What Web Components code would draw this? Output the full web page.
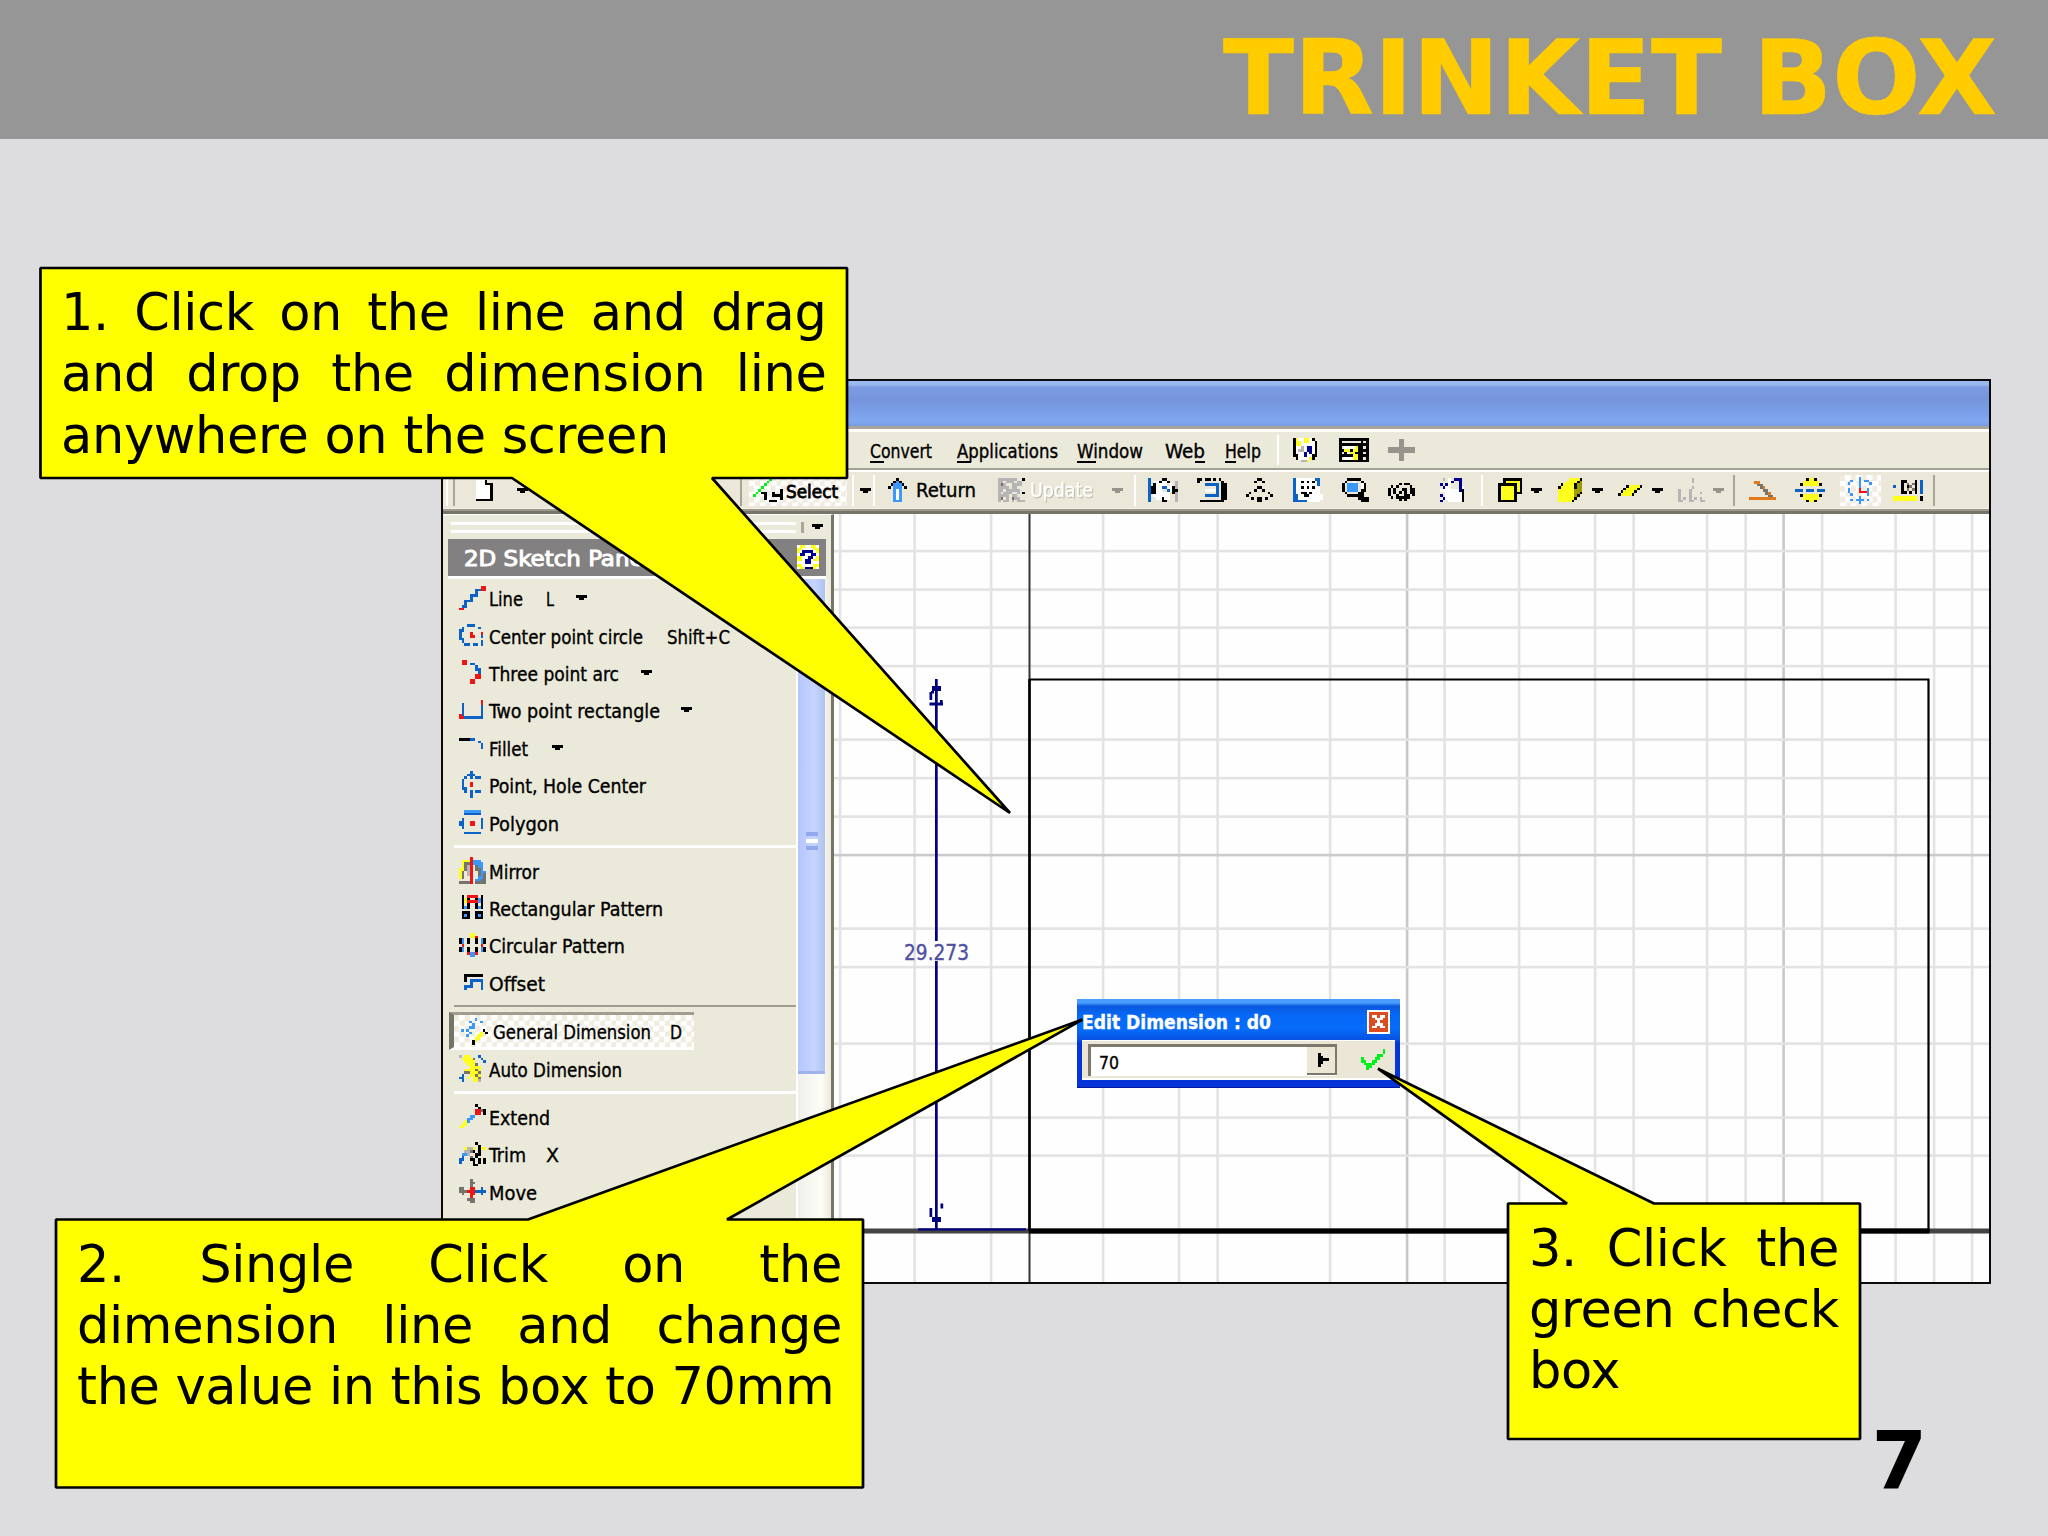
<!DOCTYPE html>
<html lang="en">
<head>
<meta charset="utf-8">
<title>Trinket Box</title>
<style>
body{margin:0;width:2048px;height:1536px;overflow:hidden;background:#dddcde}
</style>
</head>
<body>
<slide-page>
  <slide-title slot="title">TRINKET BOX</slide-title>
  <app-window slot="shot"></app-window>
  <call-out box="40.5,268,847,478" tail="512,478,1010,813,712,478" side="bottom" pad="20.5" lines="1. Click on the line and drag|and drop the dimension line|anywhere on the screen"></call-out>
  <call-out box="56,1219.5,863,1487.5" tail="528,1219.5,1082.5,1019.6,727,1219.5" side="top" pad="21" lines="2. Single Click on the|dimension line and change|the value in this box to 70mm"></call-out>
  <call-out box="1508,1203.5,1860,1439" tail="1567,1203.5,1378,1068.7,1654,1203.5" side="top" pad="21" lines="3. Click the|green check|box"></call-out>
  <page-number>7</page-number>
</slide-page>
<script>
const UI = "'DejaVu Sans Condensed','DejaVu Sans',sans-serif";
const def = (name, render) => customElements.define(name, class extends HTMLElement {
  connectedCallback() {
    if (!this.shadowRoot) this.attachShadow({mode: 'open'}).innerHTML = render(this);
  }
});

/* Pixel-art glyphs: one letter per cell, rows split by "/" */
const PAL = {r:'#f01414',b:'#0c62c6',l:'#3a98fa',y:'#ffff1e',k:'#000',g:'#74746c',w:'#fff',n:'#00008c',o:'#e07a1c',s:'#b6b4b4',v:'#9c9c00',t:'#96948c',e:'#00f01e'};
const ICONS = {
  line:'........rr/......bbrr/......b.../....bbb.../....b...../..bbb...../..b......./.bb......./rr........',
  circle:'...bbb..../.b.....b../bb......../b...r...r./b...rr..b./bb......../.b......b./..bb.bb.b.',
  arc:'.rr......./.rr.bb..../......b.../......bb../.......b../......rr../......rr../....rr..../....rr....',
  rect:'........r./.b......r./.b......b./.b......b./.b......b./rb......b./rrbbbbbbb.',
  fillet:'kkkkbb..../.......b../........b./........b./........../........../..........',
  point:'....b...../...bbb..../..b.b.bb../.b......../.b..r...../.b..r...../.bb......./..b.b.bb../....b...../....b.....',
  polygon:'..llllll../..bbbbbb../........../.b......b./bb..rr..b./bb..rr..b./.b......b./........../..bbbbbb..',
  mirror:'....r...../.yyyrlll../.yggrllll./.ygsr.gll./yygsr.ggl./yg.sr..gll/yg.sr..glg/yg..r..llg/....r.llgg/ggggr.gggg',
  rpat:'.k.rrrr.k./.kyk..klk./.kyrrrrlk./.k.k..k.k./.klk..klk./........../.kkk..kkk./.klk..klk./.kkk..kkk.',
  cpat:'....yy..../....yyr.../kl.k..k.lk/kl.k..k.lk/.r......r./kl.k..k.lk/kl.k..k.lk/...rllr.../....ll....',
  offset:'..kkkkkkk./..k......./..k.bbbbb./....b...b./..bbb...b./..b.....b.',
  gdim:'.....l..../...l...l../....l...../...ll...../l.l.....k./...l...y.k/..l...yy../.....yy.../....ky..../....k.....',
  adim:'s.yy...b../.yyyyg..b./..yyyy...b/...yyyg.../....yyyy../..yyyygy../..ggyyyg../.b..yygy../bb.y.yyg../.b...yys..',
  extend:'......k.../.......k../......rrgk/......rr.k/....ll..../...ll...../..yl....../.yy......./yy........',
  trim:'......k.../.......k../..yssy.kyy/..ssgk.k../.lls..kk../.b..g.k.../bb..kk.k.k/b....k.k.k/.....kk...',
  move:'....g...../....gg..../....g...../gg..rr..b./gggrrrbbbb/.g..rr..b./....r...../...ggg..../....gg....',
  more:'....b...../...bbb..../....b.....',
  doc:'..wwwk../..wwwkkk/..wwwwwk/..wwwwwk/..wwwwwk/..wwwwwk/..wwwwwk/..kkkkkk',
  dd:'kkkk/.kk.', ddt:'tttt/.tt.',
  sel:'......e...../.....e....../....e......./...e......../..e.......k./.e.kk..k..k./e...k..kkkk./....k.....k./......kkk...',
  up:'...k.../..klk../.klllk./k.lll.k/..lwl../..lwl../..lwl../..lwl../..lll..',
  upd:'sssssss..k/ss.sss.ss./sgs..ssss./ssss.ss.../ss.sssss../s.sss..s.k/ssss.ss.../sg.s.gss../s.ss.s.sss',
  t1:'b....kk..../b.wwkwwk..s/b.kwwww.w.s/bkkwwbbwwks/bkkww..bwkk/bkkwwwww.ks/b.wwwwww..s/b..wwkww..s/b....kk...s',
  t2:'kk.kk.k.k./k........k./...bbbbb.kk/.......b.kk/...wwwwb.kk/.......b.kk/...bbbbb.kk/.........kk/.kkkkkkkkk.',
  t3:'....kk..../...k..k.../........../....kk..../...k..k.../.k......k./k........k/..k.kk.k../....kk....',
  t4:'bwwwwwwwbb./bwwkwkwkwb./bwwwwwwwwb./bwwkwkwkww./bwwwwwwwww./bwwkkwkwww./bbwwkkwwwww/bbwwwwwwwww/bbbbbwwwww.',
  t5:'..kkkkk.../.k..w..k../k.llll.wk./k.llll.wk./k.llll.kk./.k....kk../..kkkkkk../......kkkk/.......kkk',
  t6:'........../....k.kk../.k.k....k./k.k..kk.kk/k.k.k.k.kk/k..k..kk.k/.k.kkkkk../....k.k...',
  t7:'.s.w.nnn./...wn..n./n.nw...n./.nww...nw/wwwwwwwnk/..wwwwwwk/n.wwwwwwk/.nwwwwwwk/n..wwwwwk',
  sq:'..kkkkkkk/..kyyyyyk/kkkkkkkyk/kyyyyykyk/kyyyyykyk/kyyyyykkk/kyyyyyk../kyyyyyk../kkkkkkk..',
  box:'....yyyyk/...yyyykv/.kyyyykvv/kyyyyykvv/yyyyyyvvv/yyyyyyvvk/yyyyyyvk./yyyyyyk../yyyyyk...',
  para:'...kyyyyk/..kyyyyk./.kyyyyk../kyyyyk...',
  tree:'.....s..../.....s..../........../.....s..../s...s...../s...s...s./s...s..../s.s.s.s.s/ss..ss..ss',
  ang:'..oo......./...gg....../....go...../.....gg..../......go.../.......gg../oooooooooo.',
  flag:'....kyyk.../...yyyyyy../..kyyyyyyk./.........../bbb.bbb.bbb/.........../..kyyyyyyk./...yyyyyy../....kyyk...',
  coord:'.....l...../..l..l.ll../.l...l...l./.....l...../.l...r..l../.l...rrrl../..l.....l../.....l...../..l.lll.l../.....l.....',
  dim:'...kk...k.b/...k.g.gk.b/b..k.kg.k.b/...k.g.gk.b/...kk.k.k.b/........../yyyyyyyyy.k/yyyyyyyyy.k',
  m1:'kywwyywk./kyywyywwk/kyywwwwwk/kwwswnnwk/kwsswnnwk/kwwwnwnwk/kkwwnwwkk/.kwwwwyk./...ssy...',
  m2:'kkkkkkkkkkk/k.......k.k/kkkkkkkkkkk/k.wwwwykk.k/kkyykyykkkk/k.kwyykkk.k/kkkkkyykkkk/k.wwwyykk.k/kkkkkkkkkkk',
  plus:'....tt..../....tt..../....tt..../tttttttttt/tttttttttt/....tt..../....tt..../....tt....',
  help:'wyywwyyw/yywwwwyy/ywnnnnwy/wnnwwnnw/yywwnnwy/yywnnwyy/wwwnnwww/yywwwwyy/wyynnkyw',
  play:'k.../kk../kkkk/kk../k...',
  close:'ww.ww/.www./..w../.www./ww.ww',
  check:'........e/........e/......ee./e....ee../ee..ee.../.eeee..../..ee....../..e......'
};
def('pixel-icon', el => {
  const c = +(el.getAttribute('cell') || 2.7);
  const rows = ICONS[el.getAttribute('name')].split('/');
  const w = Math.max(...rows.map(r => r.length)) * c, h = rows.length * c;
  let out = '';
  rows.forEach((row, y) => { for (const m of row.matchAll(/([a-z])\1*/g))
    out += `<rect x="${m.index*c}" y="${y*c}" width="${m[0].length*c}" height="${c}" fill="${PAL[m[1]]}"/>`; });
  return `<style>:host{display:block;flex:none}svg{display:block}</style><svg width="${w}" height="${h}" shape-rendering="crispEdges">${out}</svg>`;
});

/* One line of text stretched to an exact width */
def('fit-text', el => {
  const w = el.getAttribute('w'), s = el.getAttribute('size') || 19.5, h = el.getAttribute('h') || 24, y = el.getAttribute('y') || 18;
  return `<style>:host{display:block;flex:none}svg{display:block;overflow:visible}text{font-family:var(--face,${UI});font-weight:var(--weight,400);word-spacing:var(--ws,0);stroke:currentColor;stroke-width:var(--sw,.35px)}</style>
  <svg width="${w}" height="${h}"><text x="0" y="${y}" font-size="${s}" fill="currentColor" textLength="${w}" lengthAdjust="spacingAndGlyphs">${el.textContent}</text></svg>`;
});

def('slide-page', () => `<style>
  :host{display:flex;flex-direction:column;position:relative;width:2048px;height:1536px}
  .shot{margin:240px 0 0 441px}
</style><slot name="title"></slot><div class="shot"><slot name="shot"></slot></div><slot></slot>`);

def('slide-title', el => `<style>
  :host{display:flex;justify-content:flex-end;height:139px;background:#969696;color:#fc0;--face:'DejaVu Sans',sans-serif;--weight:700;--ws:-5px;--sw:.6px}
  fit-text{margin-right:51px}
</style><fit-text w="774" size="102.5" h="139" y="113.5">${el.textContent}</fit-text>`);

def('page-number', () => `<style>
  :host{position:absolute;left:1871.500px;top:1414px;font:700 80px/94px 'DejaVu Sans',sans-serif;color:#000}
</style><slot></slot>`);

def('call-out', el => {
  const [x1,y1,x2,y2] = el.getAttribute('box').split(',').map(Number);
  const [ax,ay,tx,ty,bx,by] = el.getAttribute('tail').split(',').map(Number);
  const pts = el.getAttribute('side') === 'bottom'
    ? `${x1},${y1} ${x2},${y1} ${x2},${y2} ${bx},${by} ${tx},${ty} ${ax},${ay} ${x1},${y2}`
    : `${x1},${y1} ${ax},${ay} ${tx},${ty} ${bx},${by} ${x2},${y1} ${x2},${y2} ${x1},${y2}`;
  const L = el.getAttribute('lines').split('|');
  const pad = el.getAttribute('pad');
  return `<style>
  :host{position:absolute;left:0;top:0;width:2048px;height:1536px}
  svg{position:absolute;left:0;top:0}
  .text{position:absolute;left:${x1}px;top:${y1}px;width:${x2-x1}px;box-sizing:border-box;padding:14px ${pad}px 0;font:51px/61.4px 'DejaVu Sans',sans-serif;letter-spacing:-.35px;color:#000}
  .text div{text-align-last:justify;white-space:nowrap}
  .text div:last-child{text-align-last:left}
</style><svg width="2048" height="1536"><polygon points="${pts}" fill="#ff0" stroke="#000" stroke-width="2.7" stroke-linejoin="bevel"/></svg>
<div class="text">${L.map(t => `<div>${t}</div>`).join('')}</div>`;
});

/* Horizontal strip: entries are [x, width, markup]; gaps come from the x values */
const strip = (start, items) => { let at = start; return items.map(([x, w, m]) => {
  const g = x - at; at = x + w;
  return `<span style="margin-left:${g}px;width:${w}px">${m}</span>`; }).join(''); };
const ico = n => `<pixel-icon name="${n}"></pixel-icon>`;
const vline = c => `<i style="background:${c}"></i>`;

def('menu-strip', () => `<style>
  :host{display:flex;align-items:center;height:36px;background:#ebe9d9;border-bottom:2px solid #a5a294}
  span{flex:none;display:block}i{display:block;width:2px;height:30px}
  .u{border-bottom:2px solid #000;width:14px;margin-top:-3px}
  .m{padding-top:2px}
</style>${strip(443, [
  [870,62,'<div class="m"><fit-text w="62">Convert</fit-text><div class="u"></div></div>'],
  [957,101,'<div class="m"><fit-text w="101">Applications</fit-text><div class="u"></div></div>'],
  [1077,66,'<div class="m"><fit-text w="66">Window</fit-text><div class="u" style="width:19px"></div></div>'],
  [1165,40,'<div class="m"><fit-text w="40">Web</fit-text><div class="u" style="width:10px;margin-left:30px"></div></div>'],
  [1225,36,'<div class="m"><fit-text w="36">Help</fit-text><div class="u" style="width:11px"></div></div>'],
  [1277,2,vline('#fff')],[1293,27,ico('m1')],[1339,31,ico('m2')],[1388,27,ico('plus')]])}`);

def('tool-strip', () => `<style>
  :host{display:flex;align-items:center;height:37px;border-top:2px solid #fff;background:#ebe8d9;border-bottom:2px solid #9c998a;box-shadow:inset 0 -1px #f4f2e6}
  span{flex:none;display:block}i{display:block;width:2px;height:31px}
  .chk{display:flex;align-items:center;height:31px;background:repeating-conic-gradient(#fff 0 25%,#f1ebe0 0 50%) 0 0/10.8px 10.8px}
  .dis{color:#fff;filter:drop-shadow(1px 1px 0 #b9b6a8)}
</style>${strip(443, [
  [446,5,vline('#fff')],[453,2,vline('#a8a598')],[471,24,ico('doc')],[517,11,ico('dd')],[543,11,ico('dd')],
  [740,2,vline('#a8a598')],[749,98,`<div class="chk" style="padding-left:4px">${ico('sel')}<fit-text w="52" style="margin-left:1px;--sw:.8px" size="18.5" y="19">Select</fit-text></div>`],
  [852,2,vline('#fff')],[860,11,ico('dd')],[873,2,vline('#fff')],
  [888,19,ico('up')],[916,60,'<fit-text w="60">Return</fit-text>'],
  [998,27,ico('upd')],[1030,63,'<fit-text class="dis" w="63">Update</fit-text>'],[1112,11,ico('ddt')],[1134,2,vline('#fff')],
  [1148,30,ico('t1')],[1197,30,ico('t2')],[1246,27,ico('t3')],[1293,30,ico('t4')],[1342,27,ico('t5')],[1388,30,ico('t6')],[1440,25,ico('t7')],
  [1481,2,vline('#fff')],[1498,25,ico('sq')],[1531,11,ico('dd')],[1558,25,ico('box')],[1592,11,ico('dd')],[1618,25,ico('para')],[1652,11,ico('dd')],
  [1678,27,ico('tree')],[1713,11,ico('ddt')],[1733,2,vline('#a8a598')],[1749,30,ico('ang')],[1795,30,ico('flag')],
  [1840,41,`<div class="chk" style="padding-left:5px">${ico('coord')}</div>`],[1893,30,ico('dim')],[1933,2,vline('#a8a598')]])}`);

const row = (icon, text, w, tail = '', cls = '') => `<div class="row ${cls}"><b>${ico(icon)}</b><fit-text w="${w}" h="37" y="27" size="20">${text}</fit-text>${tail}</div>`;
const key = (t, w, gap) => `<fit-text w="${w}" h="37" y="27" size="20" style="margin-left:${gap}px">${t}</fit-text>`;
const dd = gap => `<pixel-icon name="dd" style="margin-left:${gap}px"></pixel-icon>`;

def('sketch-panel', () => `<style>
  :host{display:flex;flex-direction:column;width:388px;background:#ebe9d9;border-right:3px solid #77756a;flex:none;border-top:1px solid #fff}
  .grip{display:flex;align-items:center;height:24px;padding:0 8px 0 8px}
  .grip u{flex:1;height:5px;border-top:3px solid #fff;border-bottom:3px solid #fff;margin-right:5px}
  .grip i{width:3px;height:11px;background:#aaa79a;margin-right:8px}
  .head{display:flex;align-items:center;justify-content:space-between;height:37px;margin:0 5px 0 5px;background:#828080;color:#fff;padding:0 7px 0 16px;border-bottom:3px solid #fff}
  .body{display:flex;flex:1;min-height:0}
  .list{flex:1;display:flex;flex-direction:column}
  .row{display:flex;align-items:center;height:37.4px;flex:none;padding-left:16px;box-sizing:border-box}
  .row b{width:30px;flex:none}
  .on{margin-left:6px;width:245px;padding-left:7px;border:solid;border-width:3px 0 3px 5px;border-color:#a19e90 #fff #fff #77756a;background:repeating-conic-gradient(#fff 0 25%,#f1ece0 0 50%) 0 0/10.8px 10.8px}
  .on b{width:32px}
  .on fit-text{margin-top:-1px}
  hr{flex:none;border:0;height:3px;background:#fff;margin:4px 0 3.6px 11px}
  hr.d{background:#a09e90;height:2px;margin-bottom:5.5px}
  .bar{width:35px;flex:none;border-left:2px solid #fff;background:linear-gradient(90deg,#f0efea,#fdfdf8 70%,#ebe9d9);box-sizing:border-box}
  .thumb{display:flex;flex-direction:column;align-items:center;justify-content:center;gap:3px;width:27px;height:495px;background:linear-gradient(90deg,#b4c6fa,#c6d4ff 60%,#aec4ee);border-bottom:3px solid #9db2ee;box-sizing:border-box;padding-top:32px}
  .thumb i{width:12px;height:4px;background:#8fa8ee}.thumb i+i{background:#fff}.thumb i+i+i{background:#8fa8ee}
</style>
<div class="grip"><u></u><i></i>${ico('dd')}</div>
<div class="head"><fit-text w="186" h="37" y="26.500" size="20.5" style="--sw:.9px">2D Sketch Panel</fit-text>${ico('help')}</div>
<div class="body"><div class="list">
${row('line','Line',34, key('L',8,23)+dd(22))}
${row('circle','Center point circle',154, key('Shift+C',63,24))}
${row('arc','Three point arc',130, dd(22))}
${row('rect','Two point rectangle',171, dd(21))}
${row('fillet','Fillet',39, dd(24))}
${row('point','Point, Hole Center',157)}
${row('polygon','Polygon',70)}
<hr>
${row('mirror','Mirror',50)}
${row('rpat','Rectangular Pattern',174)}
${row('cpat','Circular Pattern',136)}
${row('offset','Offset',56)}
<hr class="d">
${row('gdim','General Dimension',158, key('D',12,19),'on')}
${row('adim','Auto Dimension',133)}
<hr>
${row('extend','Extend',61)}
${row('trim','Trim',37, key('X',13,20))}
${row('move','Move',48)}
${row('more','',0)}
</div><div class="bar"><div class="thumb"><i></i><i></i><i></i></div></div></div>`);

def('edit-dialog', () => `<style>
  :host{position:absolute;left:243px;top:485px;width:323px;height:89px;box-sizing:border-box;display:flex;flex-direction:column;padding:0 5px 7px;border-bottom:1px solid #0018a0;background:linear-gradient(#4a9cff 0,#4a9cff 4px,#0a58dc 7px,#0668f6 16px,#066cfa 30px,#0850e0 41px,#0636d8 44px,#0634d8 100%)}
  .cap{display:flex;align-items:center;justify-content:space-between;height:41px;color:#fff;--weight:700}
  .x{display:flex;align-items:center;justify-content:center;width:19px;height:20px;border:2px solid #fff;background:#dc4c20;margin:4px 5px 0 0}
  .body{display:flex;align-items:center;flex:1;background:#ece6d6;padding:0 12px 0 6px;border-top:1px solid #fff;border-bottom:2px solid #fff}
  .in{display:flex;align-items:center;box-sizing:border-box;width:249px;height:32px;border-left:3px solid #7c796c;border-top:3px solid #7c796c;background:#fff;padding-left:8px;color:#000}
  .go{display:flex;align-items:center;justify-content:center;width:30px;height:28px;margin-left:auto;background:#ece6d6;border-right:2px solid #7c796c;border-bottom:2px solid #7c796c;box-sizing:border-box;padding-left:5px}
  .ok{margin:0 0 0 auto;width:22px}
</style>
<div class="cap"><fit-text w="189" h="41" y="30" size="20">Edit Dimension : d0</fit-text><div class="x"><pixel-icon name="close"></pixel-icon></div></div>
<div class="body"><div class="in"><fit-text w="20" size="18" h="26" y="21">70</fit-text><div class="go">${ico('play')}</div></div><div class="ok">${ico('check')}</div></div>`);

def('sketch-canvas', () => {
  const dark = [1407,1783.5];
  const vs = [840,914.5,991,1103,1179,1217.5,1330,1407,1444.5,1519,1595,1633.5,1707,1745.5,1783.5,1822,1895.5,1934,1972];
  const hs = [551,589.5,627.5,666,739.5,778,816.5,855,928.5,967,1043.5,1117.5,1155.5];
  const V = vs.map(x => `<rect x="${x-1.2}" y="514" width="2.6" height="769" fill="${dark.includes(x)?'#c8c8ca':'#e3e3e4'}"/>`).join('');
  const H = hs.map(y => `<rect x="834" y="${y-1.2}" width="1156" height="2.6" fill="${y===855?'#cacacc':'#e3e3e4'}"/>`).join('');
  return `<style>:host{display:block;position:relative;flex:1;background:#fefefe}svg{display:block}text{font-family:'DejaVu Sans',sans-serif}</style>
<svg width="1155" height="769" viewBox="834 514 1155 769">${V}${H}
<rect x="834" y="1228.5" width="1156" height="5" fill="#444"/><rect x="1028.5" y="514" width="2" height="769" fill="#333"/>
<path d="M1029.5 679.5H1928.5V1231" fill="none" stroke="#000" stroke-width="2.2"/><path d="M1029.5 679V1231" stroke="#000" stroke-width="2.6"/>
<rect x="1029" y="1228.5" width="900.5" height="5" fill="#000"/>
<g fill="#00007e"><rect x="935" y="679" width="2.7" height="262"/><rect x="935" y="961" width="2.7" height="268"/><rect x="918" y="1228.3" width="108" height="2.2"/>
<rect x="932" y="686" width="9" height="5"/><rect x="929.5" y="692" width="2.7" height="8"/><rect x="931" y="691" width="3" height="2.5"/><rect x="929.5" y="702.5" width="13.5" height="3"/><rect x="940" y="700" width="2.7" height="4"/>
<rect x="932" y="1217" width="9" height="5"/><rect x="929.5" y="1208" width="2.7" height="9"/><rect x="940.5" y="1203.500" width="2.7" height="5"/></g>
<text x="904" y="959.5" font-size="22" fill="#5050a0" stroke="#5050a0" stroke-width=".4" textLength="65" lengthAdjust="spacingAndGlyphs">29.273</text></svg>
<edit-dialog></edit-dialog>`;
});

def('app-window', () => `<style>
  :host{display:flex;flex-direction:column;width:1550px;height:905px;box-sizing:border-box;border:2px solid #0a0a0a;background:#ebe9d9;overflow:hidden}
  .bar{flex:none;height:45px;background:linear-gradient(#9db9f0 0,#9ab6ee 4px,#7c9ce2 6px,#7694dc 18px,#7a9ee6 30px,#80a8f0 40px,#7898dc 46px);border-bottom:3px solid #a8a4a0}
  .gap{flex:none;height:3px;background:#fff}
  .main{display:flex;flex:1;min-height:0;border-top:3px solid #77756a}
</style><div class="bar"></div><div class="gap"></div><menu-strip></menu-strip><tool-strip></tool-strip>
<div class="main"><sketch-panel></sketch-panel><sketch-canvas></sketch-canvas></div>`);
</script>
</body>
</html>
